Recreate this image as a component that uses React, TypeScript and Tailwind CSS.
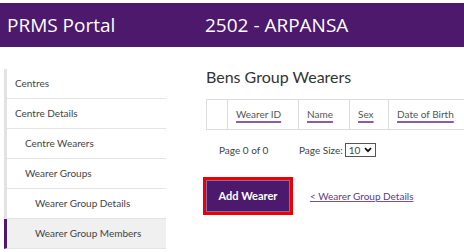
import React from 'react';

const navItems = [
  { label: 'Centres', indent: 'pl-[8px]' },
  { label: 'Centre Details', indent: 'pl-[8px]' },
  { label: 'Centre Wearers', indent: 'pl-[18px]' },
  { label: 'Wearer Groups', indent: 'pl-[18px]' },
  { label: 'Wearer Group Details', indent: 'pl-[28px]' },
  { label: 'Wearer Group Members', indent: 'pl-[28px]', active: true },
];

const columns = [
  { label: 'Wearer ID', w: 'w-[71px]' },
  { label: 'Name', w: 'w-[51px]' },
  { label: 'Sex', w: 'w-[39px]' },
  { label: 'Date of Birth', w: 'w-[90px]' },
];

export default function App() {
  return (
    <div className="w-[464px] h-[252px] overflow-hidden bg-white pt-[3px] font-['Lato',sans-serif] text-[#444]">
      {/* header */}
      <header className="h-[44px] bg-[#4c196c] flex items-center text-white font-['Open_Sans',sans-serif] text-[19px]">
        <span className="pl-[7px] w-[205px] shrink-0">PRMS Portal</span>
        <span>2502 - ARPANSA</span>
      </header>

      <div className="flex pt-[22px]">
        {/* side nav */}
        <nav className="ml-[4px] w-[162px] shrink-0 border-l-[3px] border-[#e2e2e2] flex flex-col">
          {navItems.map((item) => (
            <div
              key={item.label}
              className={`h-[30px] flex items-center text-[10px] whitespace-nowrap border-b border-[#e4e4e4] ${item.indent} ${
                item.active ? 'bg-[#f0f0f0] -ml-[3px] border-l-[3px] border-l-[#4c196c] !pl-[28px]' : ''
              }`}
            >
              {item.label}
            </div>
          ))}
        </nav>

        {/* main content */}
        <main className="flex-1 pl-[40px] -mt-[4px] shrink-0">
          <h1 className="text-[16px] text-[#333] leading-[24px] whitespace-nowrap">Bens Group Wearers</h1>
          <div className="mt-[10px] flex border border-[#dcdcdc] h-[31px] w-[300px]">
            <div className="w-[21px] shrink-0 border-r border-[#dcdcdc]" />
            {columns.map((c) => (
              <div key={c.label} className={`${c.w} shrink-0 border-r border-[#dcdcdc] flex items-center pl-[8px] text-[10px] whitespace-nowrap`}>
                <a className="underline decoration-[#8a5cb0] decoration-[1.5px] underline-offset-[3px] text-[#555]">{c.label}</a>
              </div>
            ))}
          </div>
          <div className="flex items-center text-[10px] mt-[12px] h-[16px] whitespace-nowrap">
            <span className="pl-[13px] w-[93px] shrink-0">Page 0 of 0</span>
            <span>Page Size:</span>
            <div className="relative ml-[2px] h-[14px] w-[31px]">
              <select className="appearance-none h-[14px] w-[31px] border border-[#555] bg-white text-[10px] leading-none pl-[3px] py-0">
                <option>10</option>
              </select>
              <svg className="absolute right-[4px] top-[4px] pointer-events-none" width="8" height="6" viewBox="0 0 8 6">
                <path d="M1 1.2 L4 4.2 L7 1.2" fill="none" stroke="#111" strokeWidth="1.8" />
              </svg>
            </div>
          </div>
          <div className="mt-[19px] flex items-center">
            <div className="-ml-[3px] border-[3px] border-[#ee0000]">
              <button className="w-[84px] h-[32px] bg-[#4c196c] text-white text-[11px] font-bold border border-[#8a6aa6]">
                Add Wearer
              </button>
            </div>
            <a className="ml-[17px] text-[10px] underline text-[#5b3d8c] decoration-[#7b4ea0] whitespace-nowrap">&lt; Wearer Group Details</a>
          </div>
        </main>
      </div>
    </div>
  );
}
